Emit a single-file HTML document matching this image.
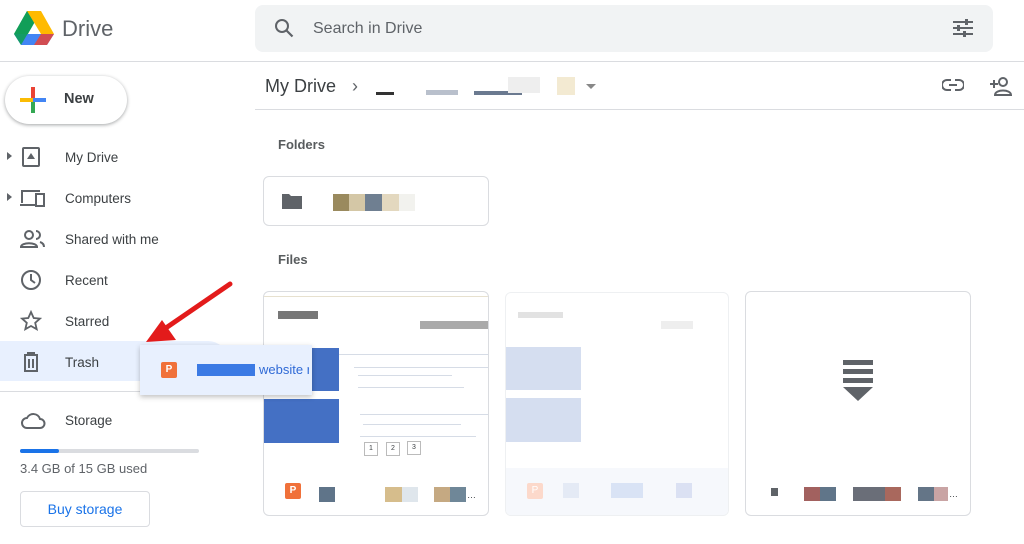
<!DOCTYPE html>
<html><head><meta charset="utf-8"><style>
*{box-sizing:border-box;margin:0;padding:0}
body{width:1024px;height:544px;overflow:hidden;background:#fff;font-family:"Liberation Sans",Arial,sans-serif;color:#3c4043;position:relative}
.a{position:absolute}
.nav{position:absolute;left:65px;font-size:13.5px;color:#3c4043}
.ic{position:absolute;left:20px}
.blk{position:absolute}
</style></head><body>
<!-- logo -->
<svg class="a" style="left:14px;top:11px" width="40" height="35" viewBox="0 0 40 35">
<path d="M13 0h14L14 23H0z" fill="#1ea362"/>
<path d="M13 0h14l13 23H27z" fill="#ffba00"/>
<path d="M7 34h26l7-11H0z" fill="#4285f4"/>
<path d="M13 0L0 23l7 11L20 12z" fill="#0f9d58" opacity=".9"/>
<path d="M33 34l7-11H27l-7 11z" fill="#ea4335" opacity=".85"/>
<path d="M14 23h12l-6-10z" fill="#fff"/>
</svg>
<div class="a" style="left:62px;top:16px;font-size:22px;color:#5f6368">Drive</div>
<!-- search -->
<div class="a" style="left:255px;top:5px;width:738px;height:47px;background:#f1f3f4;border-radius:8px"></div>
<svg class="a" style="left:274px;top:18px" width="20" height="20" viewBox="0 0 20 20"><circle cx="8" cy="8" r="6" stroke="#5f6368" stroke-width="2" fill="none"/><path d="M12.5 12.5l6 6" stroke="#5f6368" stroke-width="2.2"/></svg>
<div class="a" style="left:313px;top:20px;font-size:16px;color:#5f6368">Search in Drive</div>
<svg class="a" style="left:953px;top:19px" width="20" height="18" viewBox="0 0 20 18"><g stroke="#5f6368" stroke-width="2"><path d="M0 3h20M0 9h20M0 15h20"/></g><g fill="#5f6368"><rect x="12" y="0" width="3" height="6"/><rect x="4" y="6" width="3" height="6"/><rect x="10" y="12" width="3" height="6"/></g></svg>
<div class="a" style="left:0;top:61px;width:1024px;height:1px;background:#dadce0"></div>
<!-- New -->
<div class="a" style="left:5px;top:76px;width:122px;height:48px;border-radius:24px;background:#fff;box-shadow:0 1px 3px rgba(60,64,67,.35),0 1px 4px rgba(60,64,67,.15)"></div>
<svg class="a" style="left:20px;top:87px" width="26" height="26" viewBox="0 0 26 26"><rect x="11" y="0" width="4" height="13" fill="#ea4335"/><rect x="11" y="13" width="4" height="13" fill="#34a853"/><rect x="0" y="11" width="13" height="4" fill="#fbbc04"/><rect x="13" y="11" width="13" height="4" fill="#4285f4"/></svg>
<div class="a" style="left:64px;top:91px;font-size:14.5px;color:#3c4043;font-weight:bold">New</div>
<!-- nav -->
<div class="a" style="left:7px;top:152px;border-left:5px solid #5f6368;border-top:4px solid transparent;border-bottom:4px solid transparent"></div>
<div class="a" style="left:7px;top:193px;border-left:5px solid #5f6368;border-top:4px solid transparent;border-bottom:4px solid transparent"></div>
<svg class="ic" style="top:146px" width="22" height="22" viewBox="0 0 22 22"><rect x="3" y="2" width="16" height="18" rx="1" stroke="#5f6368" stroke-width="2" fill="none"/><path d="M7 13l4-6 4 6z" fill="#5f6368"/></svg>
<div class="nav" style="top:150px">My Drive</div>
<svg class="ic" style="top:188px" width="26" height="20" viewBox="0 0 26 20"><path d="M2 15V3h18" stroke="#5f6368" stroke-width="2" fill="none"/><path d="M0 17h15" stroke="#5f6368" stroke-width="2"/><rect x="16" y="6" width="8" height="12" stroke="#5f6368" stroke-width="2" fill="none"/></svg>
<div class="nav" style="top:191px">Computers</div>
<svg class="ic" style="top:229px" width="26" height="20" viewBox="0 0 26 20"><circle cx="9" cy="6" r="4" stroke="#5f6368" stroke-width="2" fill="none"/><path d="M1 18c0-5 16-5 16 0z" stroke="#5f6368" stroke-width="2" fill="none"/><path d="M16 2a4 4 0 010 8M20 13c3 1 4 3 4 5" stroke="#5f6368" stroke-width="2" fill="none"/></svg>
<div class="nav" style="top:232px">Shared with me</div>
<svg class="ic" style="top:269px" width="22" height="22" viewBox="0 0 22 22"><circle cx="11" cy="11" r="9" stroke="#5f6368" stroke-width="2" fill="none"/><path d="M11 5v6l4 3" stroke="#5f6368" stroke-width="2" fill="none"/></svg>
<div class="nav" style="top:273px">Recent</div>
<svg class="ic" style="top:310px" width="22" height="22" viewBox="0 0 22 22"><path d="M11 2l2.7 6 6.3.6-4.8 4.2 1.5 6.4L11 16l-5.7 3.2 1.5-6.4L2 8.6 8.3 8z" stroke="#5f6368" stroke-width="1.8" fill="none"/></svg>
<div class="nav" style="top:314px">Starred</div>
<div class="a" style="left:0;top:341px;width:228px;height:40px;background:#e8f0fe;border-radius:0 20px 20px 0"></div>
<svg class="ic" style="top:351px" width="22" height="22" viewBox="0 0 22 22"><path d="M4 4h14M8 4V2h6v2M5 5v15h12V5M9 8v9M13 8v9" stroke="#5f6368" stroke-width="2" fill="none"/></svg>
<div class="nav" style="top:355px">Trash</div>
<div class="a" style="left:0;top:391px;width:240px;height:1px;background:#dadce0"></div>
<svg class="ic" style="top:410px" width="26" height="20" viewBox="0 0 26 20"><path d="M7 18a5 5 0 010-10 7 7 0 0113 1 4.5 4.5 0 010 9z" stroke="#5f6368" stroke-width="2" fill="none"/></svg>
<div class="nav" style="top:413px">Storage</div>
<div class="a" style="left:20px;top:449px;width:179px;height:4px;background:#dadce0;border-radius:2px"></div>
<div class="a" style="left:20px;top:449px;width:39px;height:4px;background:#1a73e8;border-radius:2px"></div>
<div class="a" style="left:20px;top:461px;font-size:13px;color:#5f6368">3.4 GB of 15 GB used</div>
<div class="a" style="left:20px;top:491px;width:130px;height:36px;border:1px solid #dadce0;border-radius:4px;font-size:14px;color:#1a73e8;text-align:center;line-height:34px">Buy storage</div>
<!-- header -->
<div class="a" style="left:265px;top:76px;font-size:18px;color:#3c4043">My Drive</div>
<div class="a" style="left:352px;top:76px;font-size:18px;color:#5f6368">›</div>
<div class="blk" style="left:376px;top:92px;width:18px;height:3px;background:#333"></div>
<div class="blk" style="left:426px;top:90px;width:32px;height:5px;background:#b9c0cc"></div>
<div class="blk" style="left:474px;top:91px;width:48px;height:4px;background:#6b7a90"></div>
<div class="blk" style="left:508px;top:77px;width:32px;height:16px;background:#eee"></div>
<div class="blk" style="left:557px;top:77px;width:18px;height:18px;background:#f3ead2"></div>
<div class="a" style="left:586px;top:84px;border-top:5px solid #888;border-left:5px solid transparent;border-right:5px solid transparent"></div>
<svg class="a" style="left:942px;top:78px" width="22" height="14" viewBox="0 0 22 14"><path d="M9 2H5a5 5 0 000 10h4M13 2h4a5 5 0 010 10h-4M7 7h8" stroke="#5f6368" stroke-width="2" fill="none"/></svg>
<svg class="a" style="left:990px;top:76px" width="24" height="20" viewBox="0 0 24 20"><circle cx="13" cy="6" r="4" stroke="#5f6368" stroke-width="2" fill="none"/><path d="M5 19c0-6 16-6 16 0z" stroke="#5f6368" stroke-width="2" fill="none"/><path d="M4 4v8M0 8h8" stroke="#5f6368" stroke-width="2"/></svg>
<div class="a" style="left:255px;top:109px;width:769px;height:1px;background:#dadce0"></div>
<div class="a" style="left:278px;top:137px;font-size:13px;color:#3c4043;font-weight:bold;opacity:.85">Folders</div>
<div class="a" style="left:263px;top:176px;width:226px;height:50px;border:1px solid #dadce0;border-radius:6px"></div>
<svg class="a" style="left:282px;top:193px" width="20" height="16" viewBox="0 0 20 16"><path d="M0 1h7l2 2h11v13H0z" fill="#5f6368"/></svg>
<div class="blk" style="left:333px;top:194px;width:16px;height:17px;background:#9a8a5e"></div>
<div class="blk" style="left:349px;top:194px;width:16px;height:17px;background:#d4c7a6"></div>
<div class="blk" style="left:365px;top:194px;width:17px;height:17px;background:#6f7f91"></div>
<div class="blk" style="left:382px;top:194px;width:17px;height:17px;background:#e3d8bf"></div>
<div class="blk" style="left:399px;top:194px;width:16px;height:17px;background:#f2f2ee"></div>
<div class="a" style="left:278px;top:252px;font-size:13px;color:#3c4043;font-weight:bold;opacity:.85">Files</div>
<!-- card1 -->
<div class="a" style="left:263px;top:291px;width:226px;height:225px;border:1px solid #dadce0;border-radius:6px;overflow:hidden">
 <div class="a" style="left:0;top:4px;width:226px;height:1px;background:#e7e1cf"></div>
 <div class="a" style="left:14px;top:19px;width:40px;height:8px;background:#777"></div>
 <div class="a" style="left:156px;top:29px;width:68px;height:8px;background:#aaa"></div>
 <div class="a" style="left:0;top:62px;width:226px;height:1px;background:#d6dce6"></div>
 <div class="a" style="left:0;top:56px;width:75px;height:43px;background:#4470c4"></div>
 <div class="a" style="left:0;top:107px;width:75px;height:44px;background:#4470c4"></div>
 <div class="a" style="left:90px;top:75px;width:136px;height:1px;background:#d6dce6"></div>
 <div class="a" style="left:94px;top:83px;width:94px;height:1px;background:#d6dce6"></div>
 <div class="a" style="left:94px;top:95px;width:106px;height:1px;background:#d6dce6"></div>
 <div class="a" style="left:96px;top:122px;width:130px;height:1px;background:#d6dce6"></div>
 <div class="a" style="left:99px;top:132px;width:98px;height:1px;background:#d6dce6"></div>
 <div class="a" style="left:96px;top:144px;width:116px;height:1px;background:#d6dce6"></div>
 <div class="a" style="left:100px;top:150px;width:14px;height:14px;border:1px solid #bbb;font-size:7px;text-align:center;line-height:12px">1</div>
 <div class="a" style="left:122px;top:150px;width:14px;height:14px;border:1px solid #bbb;font-size:7px;text-align:center;line-height:12px">2</div>
 <div class="a" style="left:143px;top:149px;width:14px;height:14px;border:1px solid #bbb;font-size:7px;text-align:center;line-height:12px">3</div>
 <div class="a" style="left:21px;top:191px;width:16px;height:16px;background:#f0713a;border-radius:2px;color:#fff;font-size:10px;font-weight:bold;text-align:center;line-height:16px">P</div>
 <div class="a" style="left:55px;top:195px;width:16px;height:15px;background:#5f7489"></div>
 <div class="a" style="left:121px;top:195px;width:17px;height:15px;background:#d6bd8c"></div>
 <div class="a" style="left:138px;top:195px;width:16px;height:15px;background:#dfe6ec"></div>
 <div class="a" style="left:170px;top:195px;width:16px;height:15px;background:#c5a982"></div>
 <div class="a" style="left:186px;top:195px;width:16px;height:15px;background:#6f8798"></div>
 <div class="a" style="left:203px;top:198px;font-size:9px">…</div>
</div>
<!-- card2 faded -->
<div class="a" style="left:505px;top:292px;width:224px;height:224px;border:1px solid #eef0f2;border-radius:6px;overflow:hidden">
 <div class="a" style="left:12px;top:19px;width:45px;height:6px;background:#e2e2e2"></div>
 <div class="a" style="left:155px;top:28px;width:32px;height:8px;background:#eee"></div>
 <div class="a" style="left:0;top:54px;width:75px;height:43px;background:#d5def0"></div>
 <div class="a" style="left:0;top:105px;width:75px;height:44px;background:#d5def0"></div>
 <div class="a" style="left:0;top:175px;width:224px;height:49px;background:#f6f8fc"></div>
 <div class="a" style="left:21px;top:190px;width:16px;height:16px;background:#fcd9cb;border-radius:2px;color:#fff;font-size:10px;text-align:center;line-height:16px">P</div>
 <div class="a" style="left:57px;top:190px;width:16px;height:15px;background:#e4eaf5"></div>
 <div class="a" style="left:105px;top:190px;width:32px;height:15px;background:#d9e3f5"></div>
 <div class="a" style="left:170px;top:190px;width:16px;height:15px;background:#dbe1f3"></div>
</div>
<!-- card3 -->
<div class="a" style="left:745px;top:291px;width:226px;height:225px;border:1px solid #dadce0;border-radius:6px">
 <div class="a" style="left:97px;top:68px;width:30px;height:5px;background:#5f6368"></div>
 <div class="a" style="left:97px;top:77px;width:30px;height:5px;background:#5f6368"></div>
 <div class="a" style="left:97px;top:86px;width:30px;height:5px;background:#5f6368"></div>
 <div class="a" style="left:97px;top:95px;border-top:14px solid #5f6368;border-left:15px solid transparent;border-right:15px solid transparent"></div>
 <div class="a" style="left:25px;top:196px;width:7px;height:8px;background:#5f6368"></div>
 <div class="a" style="left:58px;top:195px;width:16px;height:14px;background:#a2615f"></div>
 <div class="a" style="left:74px;top:195px;width:16px;height:14px;background:#607589"></div>
 <div class="a" style="left:107px;top:195px;width:32px;height:14px;background:#6a6e78"></div>
 <div class="a" style="left:139px;top:195px;width:16px;height:14px;background:#a9685d"></div>
 <div class="a" style="left:172px;top:195px;width:16px;height:14px;background:#647587"></div>
 <div class="a" style="left:188px;top:195px;width:14px;height:14px;background:#c9a4a4"></div>
 <div class="a" style="left:203px;top:197px;font-size:9px">…</div>
</div>
<!-- drag chip (on top) -->
<div class="a" style="left:140px;top:345px;width:172px;height:50px;background:#e8f0fe;box-shadow:0 2px 5px rgba(0,0,0,.25);z-index:5"></div>
<div class="a" style="left:161px;top:362px;width:16px;height:16px;background:#f0713a;border-radius:2px;color:#fff;font-size:10px;font-weight:bold;text-align:center;line-height:16px;z-index:6">P</div>
<div class="a" style="left:197px;top:364px;width:58px;height:12px;background:#3b7ae4;z-index:6"></div>
<div class="a" style="left:259px;top:362px;font-size:13px;color:#2f6ad6;width:50px;overflow:hidden;white-space:nowrap;z-index:6">website r</div>
<!-- arrow -->
<svg class="a" style="left:140px;top:280px;z-index:7" width="95" height="65" viewBox="0 0 95 65"><path d="M90 4L20 52" stroke="#e31b1b" stroke-width="5" stroke-linecap="round"/><path d="M6 62l30-2-14-20z" fill="#e31b1b"/></svg>
</body></html>
